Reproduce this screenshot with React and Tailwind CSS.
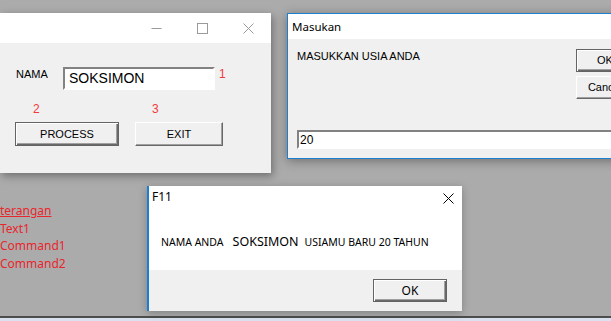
import React from "react";

const ms = { fontFamily: '"Liberation Sans", Arial, sans-serif' };
const seg = { fontFamily: '"Noto Sans", "Open Sans", sans-serif' };

function DefBtn({ w, children, className = "" }) {
  return (
    <div
      className={`h-[23px] flex items-center justify-center text-[11px] text-black bg-[#f0f0f0] border border-[#646464] shadow-[inset_1px_1px_0_#ffffff,inset_-1px_-1px_0_#696969,inset_-2px_-2px_0_#a0a0a0] shrink-0 ${className}`}
      style={{ width: w, ...ms }}
    >
      {children}
    </div>
  );
}

function Btn({ w, children, className = "" }) {
  return (
    <div
      className={`h-[23px] flex items-center justify-center text-[11px] text-black bg-[#f0f0f0] border-t border-l border-white border-b border-r border-b-[#696969] border-r-[#696969] shadow-[inset_-1px_-1px_0_#a0a0a0] shrink-0 ${className}`}
      style={{ width: w, ...ms }}
    >
      {children}
    </div>
  );
}

export default function App() {
  return (
    <div className="w-[611px] h-[321px] bg-[#ababab] overflow-hidden flex flex-col">
      <div className="relative flex-1">
        {/* Left form window */}
        <div className="absolute left-0 top-[13px] w-[271px] h-[160px] flex flex-col shadow-[2px_3px_8px_rgba(0,0,0,0.35)]">
          <div className="h-[30px] bg-white flex justify-end">
            <div className="w-[46px] h-full flex items-center justify-center">
              <svg width="11" height="11" viewBox="0 0 11 11">
                <line x1="0.5" y1="5.5" x2="10.5" y2="5.5" stroke="#9a9a9a" strokeWidth="1" />
              </svg>
            </div>
            <div className="w-[46px] h-full flex items-center justify-center">
              <svg width="11" height="11" viewBox="0 0 11 11">
                <rect x="0.5" y="0.5" width="10" height="10" fill="none" stroke="#9a9a9a" strokeWidth="1" />
              </svg>
            </div>
            <div className="w-[46px] h-full flex items-center justify-center">
              <svg width="11" height="11" viewBox="0 0 11 11">
                <path d="M0.5 0.5 L10.5 10.5 M10.5 0.5 L0.5 10.5" stroke="#9a9a9a" strokeWidth="1" />
              </svg>
            </div>
          </div>
          <div className="flex-1 bg-[#f0f0f0] pl-[15px] pt-[24px]" style={ms}>
            <div className="flex items-start h-[23px]">
              <div className="w-[48px] pl-px pt-[1px] text-[11px] leading-[13px] text-black">NAMA</div>
              <div className="w-[152px] h-[23px] bg-white border-2 border-t-[#828282] border-l-[#828282] border-b-white border-r-white flex items-center pl-[4px] text-[14px] text-black">
                SOKSIMON
              </div>
              <div className="ml-[4px] pt-[1px] text-[12px] leading-[13px] text-[#f03a3a]">1</div>
            </div>
            <div className="flex mt-[13px] h-[13px] text-[12px] leading-[13px] text-[#f03a3a]">
              <div className="w-[137px] pl-[18px]">2</div>
              <div>3</div>
            </div>
            <div className="flex gap-[16px] mt-[6px]">
              <DefBtn w={104} className="h-[24px]">PROCESS</DefBtn>
              <Btn w={88} className="h-[24px]">EXIT</Btn>
            </div>
          </div>
        </div>

        {/* Masukan window */}
        <div className="absolute left-[287px] top-[13px] w-[360px] h-[146px] border border-[#1c7fd0] flex flex-col shadow-[0_2px_10px_rgba(0,0,0,0.35)]">
          <div className="h-[25px] bg-white flex items-center pl-[4px] text-[11.5px] text-black" style={seg}>
            Masukan
          </div>
          <div className="flex-1 bg-[#f0f0f0] flex flex-col px-[9px] pt-[10px] pb-[9px]" style={ms}>
            <div className="flex">
              <div className="flex-1 text-[11px] leading-[13px] text-black pt-[1px]">MASUKKAN USIA ANDA</div>
              <div className="flex flex-col gap-[4px] mr-[3px]">
                <DefBtn w={58}>OK</DefBtn>
                <Btn w={58}>Cancel</Btn>
              </div>
            </div>
            <div className="mt-auto h-[19px] bg-white border-2 border-t-[#828282] border-l-[#828282] border-b-white border-r-white flex items-center pl-px text-[12px] text-black">
              20
            </div>
          </div>
        </div>

        {/* Left labels */}
        <div className="absolute left-0 top-[202px] flex flex-col text-[12px] leading-[17.5px] text-[#e8262c]" style={seg}>
          <span className="underline">terangan</span>
          <span>Text1</span>
          <span>Command1</span>
          <span>Command2</span>
        </div>

        {/* F11 message box */}
        <div className="absolute left-[147px] top-[186px] w-[315px] h-[125px] border-l-2 border-[#1a7fd4] flex flex-col shadow-[0_2px_8px_rgba(0,0,0,0.25)]">
          <div className="h-[84px] bg-white flex flex-col" style={seg}>
            <div className="flex justify-between items-start pl-[3px] pr-[8px] pt-[3px]">
              <span className="text-[12px] leading-[16px] text-black">F11</span>
              <svg width="11" height="11" viewBox="0 0 11 11" className="mt-[4px]">
                <path d="M0.5 0.5 L10.5 10.5 M10.5 0.5 L0.5 10.5" stroke="#000" strokeWidth="1" />
              </svg>
            </div>
            <div className="flex items-baseline pl-[12px] mt-[28px] text-black">
              <span className="text-[10.5px]">NAMA ANDA</span>
              <span className="text-[12.5px] ml-[9px]">SOKSIMON</span>
              <span className="text-[10.5px] ml-[6px]">USIAMU BARU 20 TAHUN</span>
            </div>
          </div>
          <div className="flex-1 bg-[#f0f0f0] flex justify-end items-start pt-[9px] pr-[15px]">
            <DefBtn w={74} className="text-[12px]">
              <span style={seg}>OK</span>
            </DefBtn>
          </div>
        </div>
      </div>
      <div className="h-[5px] border-t-2 border-[#4d4d4d] bg-[#d9e2ee]" />
    </div>
  );
}
